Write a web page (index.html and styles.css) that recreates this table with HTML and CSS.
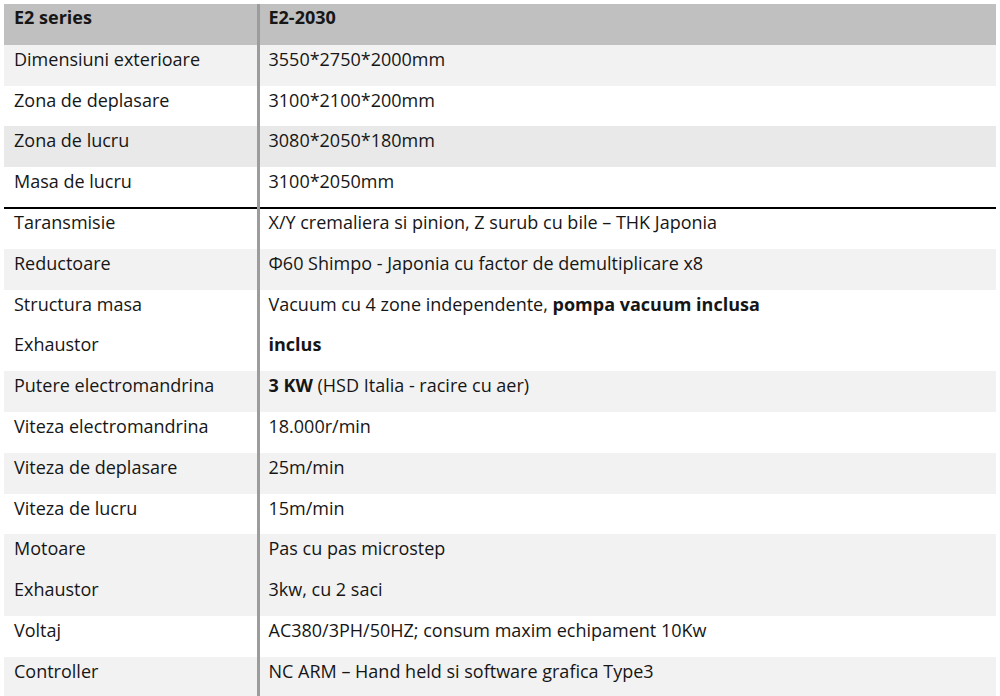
FILE: index.html
```html
<!DOCTYPE html>
<html lang="ro">
<head>
<meta charset="utf-8">
<title>E2 series</title>
<link rel="stylesheet" href="styles.css">
</head>
<body>
<table class="spec">
  <colgroup><col class="c1"><col class="c2"></colgroup>
  <thead>
    <tr class="head"><th>E2 series</th><th>E2-2030</th></tr>
  </thead>
  <tbody>
    <tr class="g"><td>Dimensiuni exterioare</td><td>3550*2750*2000mm</td></tr>
    <tr><td>Zona de deplasare</td><td>3100*2100*200mm</td></tr>
    <tr class="g2"><td>Zona de lucru</td><td>3080*2050*180mm</td></tr>
    <tr><td>Masa de lucru</td><td>3100*2050mm</td></tr>
    <tr class="sep"><td>Taransmisie</td><td>X/Y cremaliera si pinion, Z surub cu bile – THK Japonia</td></tr>
    <tr class="g"><td>Reductoare</td><td>Φ60 Shimpo - Japonia cu factor de demultiplicare x8</td></tr>
    <tr><td>Structura masa</td><td>Vacuum cu 4 zone independente, <b>pompa vacuum inclusa</b></td></tr>
    <tr><td>Exhaustor</td><td><b>inclus</b></td></tr>
    <tr class="g"><td>Putere electromandrina</td><td><b>3 KW</b> (HSD Italia - racire cu aer)</td></tr>
    <tr><td>Viteza electromandrina</td><td>18.000r/min</td></tr>
    <tr class="g"><td>Viteza de deplasare</td><td>25m/min</td></tr>
    <tr><td>Viteza de lucru</td><td>15m/min</td></tr>
    <tr class="g"><td>Motoare</td><td>Pas cu pas microstep</td></tr>
    <tr class="g"><td>Exhaustor</td><td>3kw, cu 2 saci</td></tr>
    <tr><td>Voltaj</td><td>AC380/3PH/50HZ; consum maxim echipament 10Kw</td></tr>
    <tr class="g"><td>Controller</td><td>NC ARM – Hand held si software grafica Type3</td></tr>
  </tbody>
</table>
</body>
</html>
```

FILE: styles.css
```css
html, body {
  margin: 0;
  padding: 0;
  background: #ffffff;
}
body {
  padding: 4px 4px 0 4px;
  font-family: "Open Sans", "Noto Sans", "Liberation Sans", sans-serif;
  font-size: 18px;
  color: #161616;
}
.spec {
  width: 992px;
  border-collapse: collapse;
  table-layout: fixed;
}
.c1 { width: 254px; }
.spec th, .spec td {
  height: 40.8px;
  box-sizing: border-box;
  padding: 1px 10px 0 10px;
  vertical-align: top;
  text-align: left;
  line-height: 26px;
  white-space: nowrap;
}
.spec th { font-weight: 700; padding-top: 0; }
.spec td:last-child, .spec th:last-child {
  border-left: 3px solid #9c9c9c;
  padding-left: 9px;
}
.head { background: #c0c0c0; }
.g { background: #f2f2f2; }
.g2 { background: #e9e9e9; }
.sep td { border-top: 2px solid #000; padding-top: 0; }
b { font-weight: 700; }
```
